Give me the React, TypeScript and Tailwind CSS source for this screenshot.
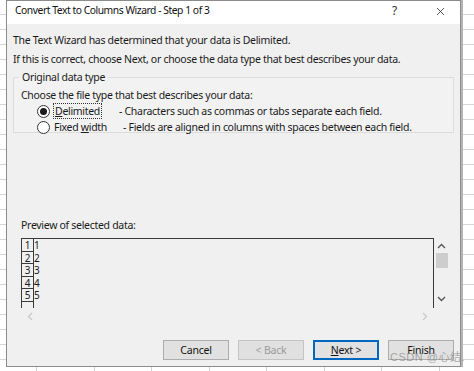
import { X } from 'lucide-react';

const rows = [1, 2, 3, 4, 5];

function Radio({ checked }: { checked: boolean }) {
  return (
    <span className="w-[13px] h-[13px] rounded-full border border-[#333] bg-white flex items-center justify-center shrink-0">
      {checked && <span className="w-[7px] h-[7px] rounded-full bg-[#1a1a1a]" />}
    </span>
  );
}

function Button({ children, primary, disabled }: { children: React.ReactNode; primary?: boolean; disabled?: boolean }) {
  return (
    <button
      className={
        'w-[66px] h-[20px] flex items-center justify-center text-[10.5px] tracking-[-0.2px] ' +
        (primary
          ? 'border-2 border-[#0067c0] bg-[#e1e1e1] text-[#111]'
          : disabled
            ? 'border border-[#c4c4c4] bg-[#e0e0e0] text-[#9a9a9a]'
            : 'border border-[#adadad] bg-[#e1e1e1] text-[#111]')
      }
    >
      {children}
    </button>
  );
}

export default function App() {
  return (
    <div className="w-[474px] h-[371px] relative overflow-hidden bg-white font-['Noto_Sans',sans-serif] text-[#1a1a1a] flex">
      {/* sheet behind, left strip */}
      <div className="w-[6px] h-full bg-[repeating-linear-gradient(to_bottom,#fff_0px,#fff_14px,#d6d6d6_14px,#d6d6d6_15px)]" />

      <div className="w-[455px] h-[367px] flex flex-col border border-[#8c8c8c] bg-[#f0f0f0] shrink-0">
        {/* Title bar */}
        <div className="h-[23px] bg-white flex items-center pl-[8px] pb-[3px] shrink-0">
          <span className="text-[10.3px] tracking-[-0.45px] text-[#111] flex-1">Convert Text to Columns Wizard - Step 1 of 3</span>
          <span className="text-[12px] text-[#333] w-[14px] mr-[28px]">?</span>
          <X className="w-[13px] h-[13px] mr-[13px] text-[#222]" strokeWidth={1.4} />
        </div>

        {/* Body */}
        <div className="flex flex-col px-[6px] text-[10.5px] tracking-[-0.3px] leading-[14px]">
          <p className="mt-[9px]">The Text Wizard has determined that your data is Delimited.</p>
          <p className="mt-[5px]">If this is correct, choose Next, or choose the data type that best describes your data.</p>

          <fieldset className="mt-[4px] border border-[#dcdcdc] bg-[#f2f2f2] pl-[7px] h-[63px]">
            <legend className="ml-[-2px] px-[3px]">Original data type</legend>
            <p className="mt-[4px]">Choose the file type that best describes your data:</p>
            <div className="flex items-center h-[16px] mt-[1px] ml-[16px]">
              <Radio checked />
              <span className="ml-[3px] w-[63px]">
                <span className="border border-dotted border-[#333] px-[1px]"><span className="underline">D</span>elimited</span>
              </span>
              <span className="ml-[3px]">- Characters such as commas or tabs separate each field.</span>
            </div>
            <div className="flex items-center h-[16px] ml-[16px]">
              <Radio checked={false} />
              <span className="ml-[4px] w-[69px]">Fixed <span className="underline">w</span>idth</span>
              <span>- Fields are aligned in columns with spaces between each field.</span>
            </div>
          </fieldset>

          <p className="mt-[85px] ml-[8px]">Preview of selected data:</p>

          {/* Preview */}
          <div className="mt-[6px] ml-[8px] flex">
            <div className="flex flex-col">
              <div className="w-[413px] h-[70px] border-t border-l border-r border-[#3a3a3a] overflow-hidden flex flex-col">
                {rows.map(n => (
                  <div key={n} className="flex h-[12.6px] shrink-0">
                    <div className="w-[12px] border-r border-b border-[#3a3a3a] text-[10px] leading-[12px] text-center">{n}</div>
                    <div className="text-[10px] leading-[12px]">{n}</div>
                  </div>
                ))}
                <div className="w-[12px] border-r border-[#3a3a3a] flex-1" />
              </div>
              <div className="h-[14px] flex items-center justify-between pl-[6px] pr-[6px] pt-[2px]">
                <svg width="6" height="9" viewBox="0 0 6 9">
                  <path d="M5 1 L1.5 4.5 L5 8" fill="none" stroke="#c8c8c8" strokeWidth="1.2" />
                </svg>
                <svg width="6" height="9" viewBox="0 0 6 9">
                  <path d="M1 1 L4.5 4.5 L1 8" fill="none" stroke="#c8c8c8" strokeWidth="1.2" />
                </svg>
              </div>
            </div>
            <div className="w-[15px] h-[70px] flex flex-col items-center">
              <svg width="9" height="6" viewBox="0 0 9 6" className="mt-[5px]">
                <path d="M1 5 L4.5 1.5 L8 5" fill="none" stroke="#555" strokeWidth="1.4" />
              </svg>
              <div className="w-[12px] h-[15px] bg-[#cdcdcd] mt-[4px]" />
              <div className="flex-1" />
              <svg width="9" height="6" viewBox="0 0 9 6" className="mb-[6px]">
                <path d="M1 1 L4.5 4.5 L8 1" fill="none" stroke="#555" strokeWidth="1.4" />
              </svg>
            </div>
          </div>

          {/* Buttons */}
          <div className="mt-[18px] flex justify-end gap-[9px]">
            <Button>Cancel</Button>
            <Button disabled>&lt; Back</Button>
            <Button primary><span><span className="underline">N</span>ext &gt;</span></Button>
            <Button>Finish</Button>
          </div>
        </div>
      </div>

      {/* right strip: shadow + sheet */}
      <div className="w-[2px] h-full bg-[#b4b4b4] shrink-0" />
      <div className="flex-1 h-full bg-[repeating-linear-gradient(to_bottom,#fff_0px,#fff_14px,#d6d6d6_14px,#d6d6d6_15px)]" />

      {/* bottom strip */}
      <div className="absolute left-0 bottom-0 w-[474px] h-[4px] bg-[repeating-linear-gradient(to_right,#fff_0px,#fff_36px,#d0d0d0_36px,#d0d0d0_37px,#fff_37px,#fff_57.5px)]" />

      {/* watermark */}
      <span className="absolute left-[390px] top-[349px] text-[11px] tracking-[0.5px] text-[#777]/60 font-['Liberation_Sans','Noto_Sans_CJK_SC',sans-serif]">CSDN @心结.</span>
    </div>
  );
}
